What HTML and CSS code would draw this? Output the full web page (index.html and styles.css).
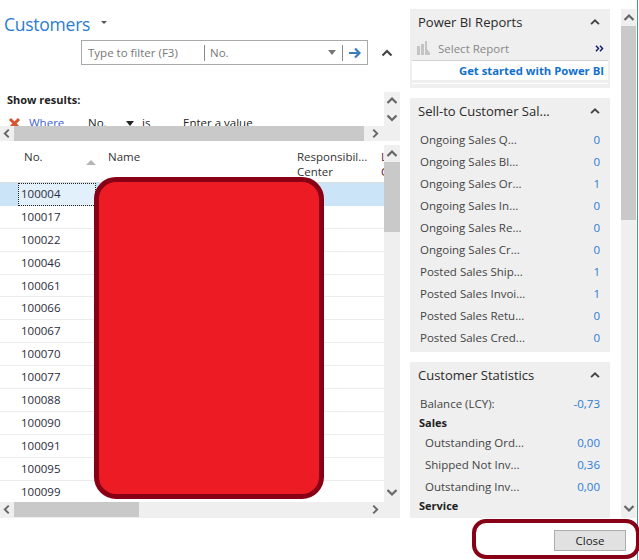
FILE: index.html
```html
<!DOCTYPE html>
<html>
<head>
  <meta charset="UTF-8">
  <title>Customers</title>
  <link rel="stylesheet" href="styles.css">
</head>
<body>
  <svg class="defs" width="0" height="0">
    <symbol id="up" viewBox="0 0 16 16"><path d="M3.5 10.5 8 6l4.500 4.500" fill="none" stroke="currentColor" stroke-width="2.200"/></symbol>
    <symbol id="down" viewBox="0 0 16 16"><path d="M3.500 6 8 10.500 12.500 6" fill="none" stroke="currentColor" stroke-width="2.200"/></symbol>
    <symbol id="left" viewBox="0 0 16 16"><path d="M10 3.500 5.500 8l4.500 4.500" fill="none" stroke="currentColor" stroke-width="2.200"/></symbol>
    <symbol id="right" viewBox="0 0 16 16"><path d="M6 3.500 10.500 8 6 12.500" fill="none" stroke="currentColor" stroke-width="2.200"/></symbol>
  </svg>

  <div class="page">
    <!-- list -->
    <div class="list">
      <div class="title-row">
        <span class="title">Customers</span>
        <span class="title-caret"></span>
      </div>
      <div class="filter-row">
        <div class="filter-box">
          <span class="filter-input">Type to filter (F3)</span>
          <span class="filter-field">No.</span>
          <span class="filter-caret"></span>
          <span class="filter-go">
            <svg width="14" height="12" viewBox="0 0 14 12"><path d="M1 6h10M7 1.500 11.500 6 7 10.500" fill="none" stroke="#3f7cbd" stroke-width="2.200"/></svg>
          </span>
        </div>
        <svg class="filter-collapse"><use href="#up"/></svg>
      </div>

      <div class="results">
        <div class="results-body">
          <div class="results-text">
            <div class="results-title">Show results:</div>
            <div class="where">
              <svg class="where-x" width="13" height="13" viewBox="0 0 13 13"><path d="M2 2l9 9M11 2l-9 9" stroke="#d9532c" stroke-width="3"/></svg>
              <span class="where-link">Where</span>
              <span class="where-no">No.</span>
              <span class="where-caret"></span>
              <span class="where-is">is</span>
              <span>Enter a value</span>
            </div>
          </div>
          <div class="mini-scroll">
            <svg class="arrow arrow-mini"><use href="#up"/></svg>
            <svg class="arrow arrow-mini"><use href="#down"/></svg>
          </div>
        </div>
        <div class="hbar hbar-top">
          <svg class="arrow"><use href="#left"/></svg>
          <div class="hthumb hthumb-wide"></div>
          <svg class="arrow arrow-end"><use href="#right"/></svg>
        </div>
      </div>

      <div class="grid-wrap">
        <div class="grid-main">
          <div class="grid">
            <div class="grid-head">
              <span class="col-no">No.</span>
              <span class="sort"></span>
              <span class="col-name">Name</span>
              <span class="col-resp">Responsibil...<br>Center</span>
              <span class="col-clip">L<br>C</span>
            </div>
            <div class="row row-current"><span class="cell-no">100004</span></div>
            <div class="row"><span class="cell-no">100017</span></div>
            <div class="row"><span class="cell-no">100022</span></div>
            <div class="row"><span class="cell-no">100046</span></div>
            <div class="row"><span class="cell-no">100061</span></div>
            <div class="row"><span class="cell-no">100066</span></div>
            <div class="row"><span class="cell-no">100067</span></div>
            <div class="row"><span class="cell-no">100070</span></div>
            <div class="row"><span class="cell-no">100077</span></div>
            <div class="row"><span class="cell-no">100088</span></div>
            <div class="row"><span class="cell-no">100090</span></div>
            <div class="row"><span class="cell-no">100091</span></div>
            <div class="row"><span class="cell-no">100095</span></div>
            <div class="row"><span class="cell-no">100099</span></div>
          </div>
          <div class="vbar vbar-grid">
            <svg class="arrow arrow-tall"><use href="#up"/></svg>
            <div class="vthumb vthumb-grid"></div>
            <svg class="arrow arrow-down"><use href="#down"/></svg>
          </div>
        </div>
        <div class="hbar hbar-bottom">
          <svg class="arrow"><use href="#left"/></svg>
          <div class="hthumb hthumb-short"></div>
          <svg class="arrow arrow-end"><use href="#right"/></svg>
        </div>
      </div>
    </div>

    <!-- factboxes -->
    <div class="side">
      <div class="panel panel-bi">
        <div class="panel-head">
          <span>Power BI Reports</span>
          <svg class="panel-chevron"><use href="#up"/></svg>
        </div>
        <div class="bi-select">
          <svg width="15" height="15" viewBox="0 0 15 15"><path d="M0 5h3v9H0zM4 3h3v11H4zM8 0h2v8l3 4v2H8z" fill="#c4c4c4"/></svg>
          <span class="bi-label">Select Report</span>
          <svg class="bi-more" width="9" height="7" viewBox="0 0 9 7"><path d="M1 .8 3.500 3.500 1 6.200M5 .8 7.500 3.500 5 6.200" fill="none" stroke="#14206a" stroke-width="1.500"/></svg>
        </div>
        <div class="bi-link">Get started with Power BI</div>
        <div class="bi-line"></div>
      </div>

      <div class="panel panel-sales">
        <div class="panel-head">
          <span>Sell-to Customer Sal...</span>
          <svg class="panel-chevron"><use href="#up"/></svg>
        </div>
        <div class="cue-list">
          <div class="cue"><span>Ongoing Sales Q...</span><span class="val">0</span></div>
          <div class="cue"><span>Ongoing Sales Bl...</span><span class="val">0</span></div>
          <div class="cue"><span>Ongoing Sales Or...</span><span class="val">1</span></div>
          <div class="cue"><span>Ongoing Sales In...</span><span class="val">0</span></div>
          <div class="cue"><span>Ongoing Sales Re...</span><span class="val">0</span></div>
          <div class="cue"><span>Ongoing Sales Cr...</span><span class="val">0</span></div>
          <div class="cue"><span>Posted Sales Ship...</span><span class="val">1</span></div>
          <div class="cue"><span>Posted Sales Invoi...</span><span class="val">1</span></div>
          <div class="cue"><span>Posted Sales Retu...</span><span class="val">0</span></div>
          <div class="cue"><span>Posted Sales Cred...</span><span class="val">0</span></div>
        </div>
      </div>

      <div class="panel panel-stats">
        <div class="panel-head">
          <span>Customer Statistics</span>
          <svg class="panel-chevron"><use href="#up"/></svg>
        </div>
        <div class="stat-first"><span>Balance (LCY):</span><span class="val">-0,73</span></div>
        <div class="stat-group stat-sales">Sales</div>
        <div class="cue cue-sub"><span>Outstanding Ord...</span><span class="val">0,00</span></div>
        <div class="cue cue-sub"><span>Shipped Not Inv...</span><span class="val">0,36</span></div>
        <div class="cue cue-sub"><span>Outstanding Inv...</span><span class="val">0,00</span></div>
        <div class="stat-group stat-service">Service</div>
      </div>
    </div>

    <div class="vbar vbar-page">
      <svg class="arrow arrow-tall"><use href="#up"/></svg>
      <div class="vthumb vthumb-page"></div>
      <svg class="arrow arrow-down"><use href="#down"/></svg>
    </div>
    <div class="edge"></div>
  </div>

  <div class="footer">
    <button class="close-btn">Close</button>
  </div>

  <!-- markup drawn over the screenshot -->
  <div class="mark-block"></div>
  <div class="mark-ring"></div>
</body>
</html>
```

FILE: styles.css
```css
html, body {
  margin: 0;
  height: 560px;
  overflow: hidden;
  background: #fff;
}
body {
  font-family: "Open Sans", "Noto Sans", sans-serif;
  font-size: 11.5px;
  color: #333;
  position: relative;
}
.defs { position: absolute; }

.page {
  display: flex;
  height: 518px;
  align-items: stretch;
}
.list { width: 400px; flex: none; }
.side { width: 200px; flex: none; margin-left: 10px; padding-top: 9px; }

/* title + filter */
.title-row {
  height: 40px;
  display: flex;
  align-items: center;
  padding: 8px 0 0 4px;
  box-sizing: border-box;
}
.title { font-size: 17.500px; color: #2b7cd3; letter-spacing: -0.25px; }
.title-caret {
  margin: -4px 0 0 11px;
  border-left: 3px solid transparent;
  border-right: 3px solid transparent;
  border-top: 3px solid #555;
}
.filter-row {
  display: flex;
  align-items: center;
  height: 25px;
  margin-left: 81px;
}
.filter-box {
  width: 287px;
  height: 25px;
  box-sizing: border-box;
  border: 1px solid #a9a9a9;
  display: flex;
  align-items: center;
  color: #777;
}
.filter-input { width: 122px; padding-left: 6px; box-sizing: border-box; }
.filter-field {
  flex: 1;
  border-left: 1px solid #888;
  padding-left: 5px;
  line-height: 16px;
}
.filter-caret {
  border-left: 4px solid transparent;
  border-right: 4px solid transparent;
  border-top: 5px solid #777;
  margin-right: 6px;
}
.filter-go {
  width: 25px;
  height: 16px;
  border-left: 1px solid #888;
  display: flex;
  align-items: center;
  justify-content: center;
  box-sizing: border-box;
}
.filter-collapse { width: 16px; height: 16px; margin-left: 11px; color: #444; }

/* show results */
.results { margin-top: 27px; }
.results-body { display: flex; height: 34px; overflow: hidden; }
.results-text { width: 384px; padding: 0 0 0 7px; box-sizing: border-box; }
.results-title { font-weight: 700; color: #222; font-size: 11px; line-height: 16px; }
.where {
  display: flex;
  align-items: center;
  margin-top: 7px;
  line-height: 16px;
  color: #222;
}
.where-x { margin-left: 1px; flex: none; }
.where-link { color: #3b5fd9; margin-left: 8px; width: 59px; }
.where-no { width: 38px; }
.where-caret {
  border-left: 4px solid transparent;
  border-right: 4px solid transparent;
  border-top: 5px solid #222;
  margin-right: 8px;
}
.where-is { width: 41px; }
.mini-scroll {
  width: 16px;
  background: #f0f0f0;
  display: flex;
  flex-direction: column;
}

/* scrollbars */
.arrow { width: 14px; height: 15px; color: #666; flex: none; display: block; }
.arrow-mini { width: 16px; height: 17px; }
.hbar { display: flex; height: 16px; background: #efefef; }
.hbar-top { height: 15px; }
.hthumb { background: #c9c9c9; height: 15px; }
.hthumb-wide { width: 350px; }
.hthumb-short { width: 125px; }
.arrow-end { margin-left: auto; margin-right: 18px; }
.vbar {
  width: 16px;
  background: #efefef;
  display: flex;
  flex-direction: column;
  align-items: center;
  flex: none;
}
.arrow-tall { height: 17px; width: 16px; }
.arrow-down { margin-top: auto; width: 16px; height: 20px; }
.vthumb { background: #c9c9c9; width: 100%; }
.vthumb-grid { height: 70px; }
.vthumb-page { height: 194px; }
.vbar-page { margin: 9px 0 0 11px; width: 15px; }
.edge { width: 1px; margin-left: 1px; background: #3f8fd8; height: 560px; flex: none; }

/* grid */
.grid-wrap { margin-top: 4px; }
.grid-main { display: flex; height: 357px; overflow: hidden; }
.grid { width: 384px; flex: none; }
.grid-head {
  display: flex;
  border-bottom: 1px solid #dcdcdc;
  line-height: 15px;
  padding-top: 4px;
  box-sizing: border-box;
  height: 38px;
  overflow: hidden;
}
.grid-head span { flex: none; }
.col-no { margin-left: 24px; width: 62px; }
.grid-head .sort {
  width: 0;
  height: 0;
  margin-top: 11px;
  border-left: 5px solid transparent;
  border-right: 5px solid transparent;
  border-bottom: 5px solid #b5b5b5;
}
.col-name { margin-left: 12px; width: 189px; }
.col-resp { width: 84px; }
.col-clip { color: #6a2030; }
.row {
  height: 22.900px;
  box-sizing: border-box;
  border-bottom: 1px solid #ececec;
  display: flex;
  align-items: stretch;
  padding-left: 18px;
  color: #2c2c3a;
}
.cell-no { width: 78px; padding-left: 3px; line-height: 22px; }
.row-current { background: #cce4f7; border-bottom: 0; }
.row-current .cell-no {
  background: #e1f0fa;
  border: 1px dotted #222;
  box-sizing: border-box;
  padding-left: 2px;
  line-height: 20px;
}

/* factboxes */
.panel { background: #efefef; margin-bottom: 10px; }
.panel-head {
  display: flex;
  justify-content: space-between;
  align-items: center;
  height: 27px;
  padding: 0 8px 2px 8px;
  box-sizing: border-box;
  font-size: 13px;
  color: #2a2a2a;
}
.panel-chevron { width: 14px; height: 14px; color: #444; }
.panel-bi { height: 79px; }
.bi-select {
  display: flex;
  align-items: center;
  height: 24px;
  padding: 0 6px 0 7px;
  color: #888;
}
.bi-label { margin-left: 6px; }
.bi-more { margin-left: auto; }
.bi-link {
  margin: 0 2px;
  height: 20px;
  background: #fff;
  border-top: 1px solid #d2d2d2;
  box-sizing: border-box;
  text-align: right;
  padding-right: 4px;
  font-weight: 700;
  color: #1070d0;
  line-height: 19px;
  font-size: 11.300px;
}
.bi-line { height: 1px; margin: 3px 2px 0; background: #fff; }
.panel-sales { height: 254px; }
.cue-list { padding-top: 4px; }
.cue {
  display: flex;
  justify-content: space-between;
  height: 22px;
  line-height: 22px;
  padding: 0 10px;
  color: #444;
}
.val { color: #2b7cd3; }
.panel-stats { height: 156px; margin-bottom: 0; }
.stat-first {
  display: flex;
  justify-content: space-between;
  padding: 6px 10px 0;
  height: 17px;
  line-height: 17px;
  color: #444;
}
.stat-group {
  font-weight: 700;
  color: #222;
  padding-left: 9px;
  height: 18px;
  line-height: 20px;
  font-size: 11px;
}
.stat-sales { margin: 1px 0; }
.stat-service { margin-top: -2px; }
.cue-sub { padding-left: 15px; }

/* footer */
.footer {
  height: 42px;
  display: flex;
  justify-content: flex-end;
  padding: 12px 13px 0 0;
  box-sizing: border-box;
}
.close-btn {
  width: 72px;
  height: 21px;
  padding: 0;
  background: #e1e1e1;
  border: 1px solid #adadad;
  font: inherit;
  color: #222;
}

/* red annotations */
.mark-block {
  position: absolute;
  left: 94px;
  top: 177px;
  width: 230px;
  height: 322px;
  box-sizing: border-box;
  background: #ed1c24;
  border: 5px solid #880015;
  border-radius: 22px;
}
.mark-ring {
  position: absolute;
  left: 472px;
  top: 519px;
  width: 168px;
  height: 40px;
  box-sizing: border-box;
  border: 4px solid #880015;
  border-radius: 14px;
}
```
